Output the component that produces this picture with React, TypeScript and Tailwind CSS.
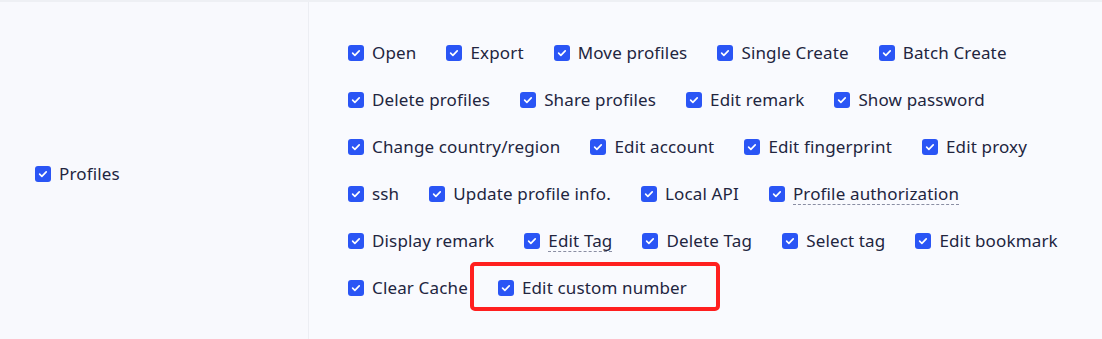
import React from 'react';

type Item = { label: string; dashed?: boolean; highlight?: boolean };

const rows: Item[][] = [
  [
    { label: 'Open' },
    { label: 'Export' },
    { label: 'Move profiles' },
    { label: 'Single Create' },
    { label: 'Batch Create' },
  ],
  [
    { label: 'Delete profiles' },
    { label: 'Share profiles' },
    { label: 'Edit remark' },
    { label: 'Show password' },
  ],
  [
    { label: 'Change country/region' },
    { label: 'Edit account' },
    { label: 'Edit fingerprint' },
    { label: 'Edit proxy' },
  ],
  [
    { label: 'ssh' },
    { label: 'Update profile info.' },
    { label: 'Local API' },
    { label: 'Profile authorization', dashed: true },
  ],
  [
    { label: 'Display remark' },
    { label: 'Edit Tag', dashed: true },
    { label: 'Delete Tag' },
    { label: 'Select tag' },
    { label: 'Edit bookmark' },
  ],
  [{ label: 'Clear Cache' }, { label: 'Edit custom number', highlight: true }],
];

const Box = () => (
  <span className="flex size-4 shrink-0 items-center justify-center rounded-[3px] bg-[#2a55f5]">
    <svg viewBox="0 0 16 16" className="size-3" fill="none">
      <path
        d="M3.5 8.2l3 2.9 5.8-6"
        stroke="white"
        strokeWidth="2.2"
        strokeLinecap="round"
        strokeLinejoin="round"
      />
    </svg>
  </span>
);

const Check = ({ item }: { item: Item }) => (
  <label className="relative flex h-[22px] items-center gap-2">
    <Box />
    <span
      className={
        item.dashed
          ? 'border-b border-dashed border-[#8a8ea3] leading-[21px]'
          : 'leading-[22px]'
      }
    >
      {item.label}
    </span>
    {item.highlight && (
      <span className="pointer-events-none absolute -top-[15px] -bottom-[12px] -left-[28px] -right-[33px] rounded-[5px] border-4 border-[#ff1f1f]" />
    )}
  </label>
);

const App = () => {
  return (
    <div
      className="flex h-[339px] w-[1102px] border-t-2 border-[#eef0f4] bg-[#f8f9fd] text-[17px] tracking-[0.15px] text-[#22253f]"
      style={{ fontFamily: '"Noto Sans", "Open Sans", sans-serif' }}
    >
      <div className="flex w-[309px] shrink-0 items-center border-r border-[#eceef3] pl-[35px] pt-[6px]">
        <Check item={{ label: 'Profiles' }} />
      </div>
      <div className="flex flex-1 flex-col gap-[25px] bg-[#f9fafe] pl-[39px] pt-[40px]">
        {rows.map((row, i) => (
          <div key={i} className="flex gap-[30px]">
            {row.map((item) => (
              <Check key={item.label} item={item} />
            ))}
          </div>
        ))}
      </div>
    </div>
  );
};

export default App;
